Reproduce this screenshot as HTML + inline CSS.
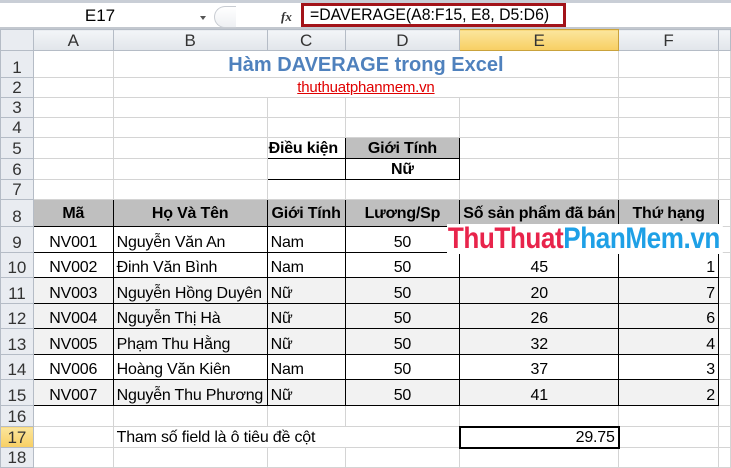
<!DOCTYPE html>
<html><head><meta charset="utf-8"><style>
*{margin:0;padding:0;box-sizing:border-box}
body{width:731px;height:465px;overflow:hidden;background:#fff;font-family:"Liberation Sans",Arial,sans-serif;position:relative}
.top{position:absolute;left:0;top:0;width:731px;height:29px;background:#fff;border-top:3px solid #c9ced6;border-bottom:2px solid #c3c8cf}
.nb{position:absolute;left:60px;top:3px;width:80px;text-align:center;font-size:17px;color:#000}
.arr{position:absolute;left:200px;top:13px;width:0;height:0;border-left:3px solid transparent;border-right:3px solid transparent;border-top:4px solid #555}
.btn{position:absolute;left:214px;top:3px;width:22px;height:22px;border:1px solid #c8ccd2;border-radius:11px 0 0 11px;border-right:none;background:linear-gradient(#fff,#eef0f3)}
.fx{position:absolute;left:281px;top:6px;font-family:"Liberation Serif",serif;font-style:italic;font-weight:bold;font-size:13px;color:#333}
.fb{position:absolute;left:301px;top:0px;width:265px;height:24px;border:3px solid #a31319;font-size:17px;padding-left:6px;line-height:18px;white-space:nowrap;overflow:hidden}
.fb span{display:inline-block;transform:scaleX(0.93);transform-origin:left}
table{position:absolute;left:0;top:29px;border-collapse:collapse;table-layout:fixed}
td{border:1px solid #d4d4d4;font-size:16px;white-space:nowrap;overflow:visible;padding:0 3px;vertical-align:bottom;line-height:19px;letter-spacing:-0.2px}
td.h{background:linear-gradient(#f3f5f8,#e1e5ea);border-color:#b5bcc6;text-align:center;color:#333;font-size:17px;vertical-align:middle;letter-spacing:0}
td.hs{background:linear-gradient(#fbe59d,#f8cf63);border-color:#c9a23c}
td.rn{background:#e9ecf1;color:#333;font-size:17px;text-align:center;border-color:#b5bcc6;vertical-align:bottom;padding:0;letter-spacing:0}
.b td.c{border:1px solid #000}
.g td.c{background:#f2f2f2}
.c{text-align:center}.r{text-align:right}
.k{border:1px solid #000!important}
.hd td.c{background:#bfbfbf;font-weight:bold;text-align:center;vertical-align:middle}
.wm{position:absolute;left:447px;top:224px;font-weight:bold;font-size:30px;letter-spacing:-0.5px;background:#fff;line-height:30px;padding:0 3px 0 1px;white-space:nowrap;transform:scaleX(0.87);transform-origin:left}
</style></head><body>
<div class="top">
<div class="nb">E17</div><div class="arr"></div><div class="btn"></div>
<div class="fx">fx</div>
<div class="fb"><span>=DAVERAGE(A8:F15, E8, D5:D6)</span></div>
</div>
<table>
<colgroup><col style="width:33px"><col style="width:80px"><col style="width:154px"><col style="width:78px"><col style="width:115px"><col style="width:159px"><col style="width:100px"><col style="width:12px"></colgroup>
<tr style="height:21px"><td class="h" style="background:#e9ecf1"></td><td class="h">A</td><td class="h">B</td><td class="h">C</td><td class="h">D</td><td class="h hs">E</td><td class="h">F</td><td class="h"></td></tr>
<tr style="height:27px"><td class="rn">1</td><td></td><td colspan="4" style="text-align:center;color:#4f81bd;font-weight:bold;font-size:20px;line-height:24px;border-bottom-color:#d4d4d4;letter-spacing:0">Hàm DAVERAGE trong Excel</td><td></td><td></td></tr>
<tr style="height:20px"><td class="rn">2</td><td></td><td colspan="4" style="text-align:center;color:#e00000;text-decoration:underline;font-size:15px;line-height:18px">thuthuatphanmem.vn</td><td></td><td></td></tr>
<tr style="height:20px"><td class="rn">3</td><td></td><td></td><td></td><td></td><td></td><td></td><td></td></tr>
<tr style="height:20px"><td class="rn">4</td><td></td><td></td><td></td><td></td><td></td><td></td><td></td></tr>
<tr style="height:21px"><td class="rn">5</td><td></td><td></td><td class="k" style="font-weight:bold;padding:0 1px">Điều kiện</td><td class="k c" style="font-weight:bold;background:#bfbfbf">Giới Tính</td><td></td><td></td><td></td></tr>
<tr style="height:21px"><td class="rn">6</td><td></td><td></td><td class="k"></td><td class="k c" style="font-weight:bold">Nữ</td><td></td><td></td><td></td></tr>
<tr style="height:20px"><td class="rn">7</td><td></td><td></td><td></td><td></td><td></td><td></td><td></td></tr>
<tr style="height:27px" class="b hd"><td class="rn">8</td><td class="c">Mã</td><td class="c">Họ Và Tên</td><td class="c" style="padding:0">Giới Tính</td><td class="c">Lương/Sp</td><td class="c" style="padding:0">Số sản phẩm đã bán</td><td class="c">Thứ hạng</td><td></td></tr>
<tr style="height:26px" class="b"><td class="rn">9</td><td class="c">NV001</td><td class="c" style="text-align:left">Nguyễn Văn An</td><td class="c" style="text-align:left">Nam</td><td class="c">50</td><td class="c">33</td><td class="c r">5</td><td></td></tr>
<tr style="height:25px" class="b"><td class="rn">10</td><td class="c">NV002</td><td class="c" style="text-align:left">Đinh Văn Bình</td><td class="c" style="text-align:left">Nam</td><td class="c">50</td><td class="c">45</td><td class="c r">1</td><td></td></tr>
<tr style="height:26px" class="b g"><td class="rn">11</td><td class="c">NV003</td><td class="c" style="text-align:left">Nguyễn Hồng Duyên</td><td class="c" style="text-align:left">Nữ</td><td class="c">50</td><td class="c">20</td><td class="c r">7</td><td></td></tr>
<tr style="height:25px" class="b g"><td class="rn">12</td><td class="c">NV004</td><td class="c" style="text-align:left">Nguyễn Thị Hà</td><td class="c" style="text-align:left">Nữ</td><td class="c">50</td><td class="c">26</td><td class="c r">6</td><td></td></tr>
<tr style="height:26px" class="b g"><td class="rn">13</td><td class="c">NV005</td><td class="c" style="text-align:left">Phạm Thu Hằng</td><td class="c" style="text-align:left">Nữ</td><td class="c">50</td><td class="c">32</td><td class="c r">4</td><td></td></tr>
<tr style="height:25px" class="b"><td class="rn">14</td><td class="c">NV006</td><td class="c" style="text-align:left">Hoàng Văn Kiên</td><td class="c" style="text-align:left">Nam</td><td class="c">50</td><td class="c">37</td><td class="c r">3</td><td></td></tr>
<tr style="height:26px" class="b g"><td class="rn">15</td><td class="c">NV007</td><td class="c" style="text-align:left">Nguyễn Thu Phương</td><td class="c" style="text-align:left">Nữ</td><td class="c">50</td><td class="c">41</td><td class="c r">2</td><td></td></tr>
<tr style="height:21px"><td class="rn">16</td><td></td><td></td><td></td><td></td><td></td><td></td><td></td></tr>
<tr style="height:20px"><td class="rn hs" style="background:linear-gradient(#fbe59d,#f8cf63)">17</td><td></td><td colspan="3" style="border-right-color:#d4d4d4">Tham số field là ô tiêu đề cột</td><td class="r" style="border:2px solid #000">29.75</td><td></td><td></td></tr>
<tr style="height:20px"><td class="rn">18</td><td></td><td></td><td></td><td></td><td></td><td></td><td></td></tr>
</table>
<div class="wm"><span style="color:#e8244b">ThuThuat</span><span style="color:#1ea0e6">PhanMem.vn</span></div>
</body></html>
